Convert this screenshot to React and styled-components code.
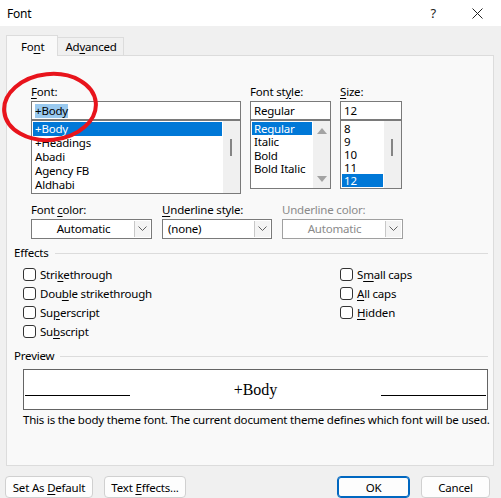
import React from 'react';
import styled, { createGlobalStyle } from 'styled-components';

const GlobalStyle = createGlobalStyle`
	html, body {
		margin: 0;
		padding: 0;
		background: #f0f0f0;
	}
	* {
		box-sizing: border-box;
	}
`;

const fontItems = ['+Body', '+Headings', 'Abadi', 'Agency FB', 'Aldhabi'];
const styleItems = ['Regular', 'Italic', 'Bold', 'Bold Italic'];
const sizeItems = ['8', '9', '10', '11', '12'];

const Check = ({ children }) => (
	<CheckRow>
		<Box />
		<span>{children}</span>
	</CheckRow>
);

const Combo = ({ value, left, disabled }) => (
	<ComboBox $disabled={disabled}>
		<ComboValue $left={left}>{value}</ComboValue>
		<ComboButton>
			<svg width="9" height="6" viewBox="0 0 9 6">
				<path d="M0.5 0.5 L4.5 4.5 L8.5 0.5" fill="none" stroke="#606060" strokeWidth="1" />
			</svg>
		</ComboButton>
	</ComboBox>
);

const App = () => {
	return (
		<Window>
			<GlobalStyle />
			<TitleBar>
				<Title>Font</Title>
				<TitleButtons>
					<Help>?</Help>
					<svg width="11" height="11" viewBox="0 0 11 11">
						<path d="M0.5 0.5 L10.5 10.5 M10.5 0.5 L0.5 10.5" stroke="#222" strokeWidth="1" />
					</svg>
				</TitleButtons>
			</TitleBar>

			<Body>
				<Tabs>
					<Tab $active>Fo<u>n</u>t</Tab>
					<Tab>Ad<u>v</u>anced</Tab>
				</Tabs>
				<Panel>
					<Fields>
						<Field>
							<Label><u>F</u>ont:</Label>
							<Input><Selected>+Body</Selected></Input>
							<List $height={74}>
								<Items $row={14}>
									{fontItems.map((f, i) => (
										<Item key={f} $active={i === 0}>{f}</Item>
									))}
								</Items>
								<Scroll>
									<Thumb $top={18} />
								</Scroll>
							</List>
						</Field>
						<Field>
							<Label>Font st<u>y</u>le:</Label>
							<Input>Regular</Input>
							<List $height={69}>
								<Items $row={13.3}>
									{styleItems.map((f, i) => (
										<Item key={f} $active={i === 0}>{f}</Item>
									))}
								</Items>
								<Scroll $arrows>
									<ArrowUp />
									<ArrowDown />
								</Scroll>
							</List>
						</Field>
						<Field>
							<Label><u>S</u>ize:</Label>
							<Input>12</Input>
							<List $height={69}>
								<Items $row={13}>
									{sizeItems.map((f, i) => (
										<Item key={f} $active={i === 4}>{f}</Item>
									))}
								</Items>
								<Scroll>
									<Thumb $top={18} />
								</Scroll>
							</List>
						</Field>
					</Fields>

					<Combos>
						<Field>
							<Label>Font <u>c</u>olor:</Label>
							<Combo value="Automatic" />
						</Field>
						<Field>
							<Label><u>U</u>nderline style:</Label>
							<Combo value="(none)" left />
						</Field>
						<Field>
							<Label $disabled>Underline color:</Label>
							<Combo value="Automatic" disabled />
						</Field>
					</Combos>

					<Section $top={6}>
						<span>Effects</span>
						<Rule />
					</Section>
					<Effects>
						<Column>
							<Check>Stri<u>k</u>ethrough</Check>
							<Check>Dou<u>b</u>le strikethrough</Check>
							<Check>Su<u>p</u>erscript</Check>
							<Check>Su<u>b</u>script</Check>
						</Column>
						<Column>
							<Check>S<u>m</u>all caps</Check>
							<Check><u>A</u>ll caps</Check>
							<Check><u>H</u>idden</Check>
						</Column>
					</Effects>

					<Section $top={7}>
						<span>Preview</span>
						<Rule />
					</Section>
					<PreviewBox>
						<PreviewLine />
						<PreviewText>+Body</PreviewText>
						<PreviewLine />
					</PreviewBox>
					<Note>This is the body theme font. The current document theme defines which font will be used.</Note>
				</Panel>
			</Body>

			<Footer>
				<Group>
					<Button $width={88}><span>Set As <u>D</u>efault</span></Button>
					<Button $width={82}><span>Text <u>E</u>ffects...</span></Button>
				</Group>
				<Group>
					<Button $width={73} $primary><span>OK</span></Button>
					<Button $width={69}><span>Cancel</span></Button>
				</Group>
			</Footer>

			<Annotation width="100" height="74" viewBox="0 0 100 74">
				<ellipse cx="49" cy="37" rx="46" ry="33" fill="none" stroke="#e8141c" strokeWidth="4" transform="rotate(-6 49 37)" />
			</Annotation>
		</Window>
	);
};

const Window = styled.div`
	position: relative;
	width: 501px;
	height: 498px;
	background: #f0f0f0;
	font-family: "Noto Sans", "Open Sans", sans-serif;
	font-size: 11.5px;
	letter-spacing: -0.2px;
	color: #000;
	display: flex;
	flex-direction: column;
	overflow: hidden;

	u {
		text-decoration: underline;
		text-underline-offset: 2px;
	}
`;

const TitleBar = styled.div`
	height: 27px;
	background: #fff;
	display: flex;
	align-items: center;
	justify-content: space-between;
	padding: 0 18px 0 7px;
`;

const Title = styled.div`
	font-size: 12px;
`;

const TitleButtons = styled.div`
	display: flex;
	align-items: center;
	gap: 36px;
`;

const Help = styled.span`
	font-size: 13px;
	color: #222;
`;

const Body = styled.div`
	padding: 8px 8px 0 6px;
`;

const Tabs = styled.div`
	display: flex;
	align-items: flex-end;
	height: 21px;
`;

const Tab = styled.div`
	height: ${(p) => (p.$active ? '21px' : '18px')};
	padding: ${(p) => (p.$active ? '0 13px 0 14px' : '0 6px 0 7px')};
	line-height: ${(p) => (p.$active ? '21px' : '18px')};
	background: ${(p) => (p.$active ? '#f9f9f9' : '#f0f0f0')};
	border: 1px solid #dcdcdc;
	border-bottom: none;
	margin-bottom: ${(p) => (p.$active ? '-1px' : '0')};
	position: relative;
	z-index: ${(p) => (p.$active ? 1 : 0)};
	border-left: ${(p) => (p.$active ? '1px solid #dcdcdc' : 'none')};
`;

const Panel = styled.div`
	height: 411px;
	width: 488px;
	background: #f9f9f9;
	border: 1px solid #dcdcdc;
	padding: 28px 5px 0 7px;
	display: flex;
	flex-direction: column;
`;

const Fields = styled.div`
	display: grid;
	grid-template-columns: 210px 81px 62px;
	column-gap: 9px;
	margin-left: 17px;
`;

const Field = styled.div`
	display: flex;
	flex-direction: column;
`;

const Label = styled.div`
	height: 16px;
	line-height: 16px;
	margin-bottom: 1px;
	color: ${(p) => (p.$disabled ? '#8a8a8a' : '#000')};
`;

const Input = styled.div`
	height: 19px;
	background: #fff;
	border: 1px solid #7a7a7a;
	padding: 0 3px;
	line-height: 17px;
	display: flex;
	align-items: center;
`;

const Selected = styled.span`
	background: #99c9ef;
	line-height: 14px;
`;

const List = styled.div`
	height: ${(p) => p.$height}px;
	background: #fff;
	border: 1px solid #7a7a7a;
	display: flex;
	overflow: hidden;
`;

const Items = styled.div`
	flex: 1;
	padding: 1px 1px 0 1px;
	div {
		height: ${(p) => p.$row}px;
		line-height: ${(p) => p.$row}px;
	}
`;

const Item = styled.div`
	padding-left: 2px;
	white-space: nowrap;
	background: ${(p) => (p.$active ? '#0078d7' : 'transparent')};
	color: ${(p) => (p.$active ? '#fff' : '#000')};
`;

const Scroll = styled.div`
	width: 17px;
	background: #f0f0f0;
	position: relative;
	display: flex;
	flex-direction: column;
	align-items: center;
	justify-content: space-between;
	padding: 7px 0 6px;
`;

const Thumb = styled.div`
	position: absolute;
	top: ${(p) => p.$top}px;
	left: 7px;
	width: 2px;
	height: 17px;
	background: #858585;
`;

const ArrowUp = styled.div`
	width: 0;
	height: 0;
	border-left: 5px solid transparent;
	border-right: 5px solid transparent;
	border-bottom: 6px solid #a3a3a3;
`;

const ArrowDown = styled(ArrowUp)`
	border-bottom: none;
	border-top: 6px solid #a3a3a3;
`;

const Combos = styled.div`
	display: grid;
	grid-template-columns: 121px 110px 121px;
	column-gap: 10px;
	margin: 8px 0 0 17px;
`;

const ComboBox = styled.div`
	height: 20px;
	background: #fff;
	border: 1px solid ${(p) => (p.$disabled ? '#a0a0a0' : '#7a7a7a')};
	color: ${(p) => (p.$disabled ? '#8a8a8a' : '#000')};
	display: flex;
	padding: 1px;
`;

const ComboValue = styled.div`
	flex: 1;
	line-height: 16px;
	text-align: ${(p) => (p.$left ? 'left' : 'center')};
	padding-left: ${(p) => (p.$left ? '4px' : '0')};
`;

const ComboButton = styled.div`
	width: 16px;
	background: #f4f4f4;
	border-left: 1px solid #c8c8c8;
	display: flex;
	align-items: center;
	justify-content: center;
`;

const Section = styled.div`
	display: flex;
	align-items: center;
	height: 16px;
	margin-top: ${(p) => p.$top}px;
	span {
		line-height: 16px;
	}
`;

const Rule = styled.div`
	flex: 1;
	margin-left: 6px;
	border-top: 1px solid #dcdcdc;
`;

const Effects = styled.div`
	display: grid;
	grid-template-columns: 317px 1fr;
	margin: 4px 0 0 9px;
`;

const Column = styled.div`
	display: flex;
	flex-direction: column;
`;

const CheckRow = styled.div`
	height: 19px;
	display: flex;
	align-items: center;
	gap: 4px;
`;

const Box = styled.div`
	width: 13px;
	height: 13px;
	border: 1px solid #333;
	border-radius: 3px;
	background: #fff;
`;

const PreviewBox = styled.div`
	margin: 5px 0 0 9px;
	height: 41px;
	width: 465px;
	background: #fff;
	border: 1px solid #646464;
	display: grid;
	grid-template-columns: 105px 1fr 105px;
	align-items: end;
	padding: 0 1px 13px;
`;

const PreviewLine = styled.div`
	border-top: 1px solid #000;
	height: 1px;
`;

const PreviewText = styled.div`
	font-family: "Liberation Serif", "Times New Roman", serif;
	font-size: 16px;
	letter-spacing: 0;
	line-height: 18px;
	text-align: center;
	margin-bottom: -3px;
`;

const Note = styled.div`
	margin: 2px 0 0 9px;
	line-height: 16px;
	white-space: nowrap;
`;

const Footer = styled.div`
	display: flex;
	justify-content: space-between;
	padding: 10px 11px 0 5px;
`;

const Group = styled.div`
	display: flex;
	gap: 11px;
`;

const Button = styled.div`
	width: ${(p) => p.$width}px;
	height: 22px;
	border: 1px solid ${(p) => (p.$primary ? '#0067c0' : '#d0d0d0')};
	box-shadow: ${(p) => (p.$primary ? 'inset 0 0 0 1px #0067c0' : 'none')};
	border-radius: 4px;
	background: #fdfdfd;
	display: flex;
	align-items: center;
	justify-content: center;
`;

const Annotation = styled.svg`
	position: absolute;
	left: 1px;
	top: 70px;
	pointer-events: none;
`;

export default App;
